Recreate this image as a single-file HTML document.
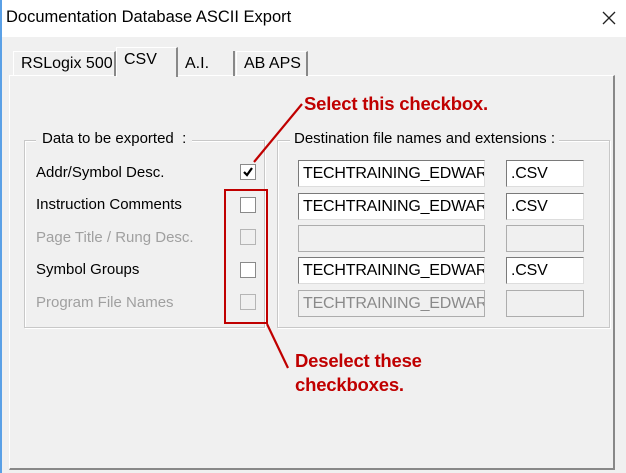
<!DOCTYPE html>
<html><head><style>
*{margin:0;padding:0;box-sizing:border-box}
body{width:626px;height:473px;background:#f0f0f0;font-family:"Liberation Sans",sans-serif;position:relative;overflow:hidden;color:#000}
.a{position:absolute}
.t{font-size:15px;white-space:nowrap}
.g{color:#a0a0a0}
.cb{position:absolute;width:16px;height:16px;border:1px solid #8a8a8a;background:#fff}
.cb.d{background:#f0f0f0;border-color:#b5b5b5}
.tb{position:absolute;height:27px;border:1px solid #7a7a7a;border-right-color:#ddd;border-bottom-color:#ddd;background:#fff;font-size:16px;line-height:25px;padding-left:4px;overflow:hidden;white-space:nowrap;letter-spacing:-0.2px}
.tb.d{background:#f0f0f0;border-color:#adadad}
.grp{position:absolute;border:1px solid #c8c8c8;box-shadow:inset 1px 1px 0 #fff,1px 1px 0 #fff}
.red{color:#c00000;font-weight:bold;font-size:18.5px;font-family:"Liberation Sans Narrow","Liberation Sans",sans-serif;letter-spacing:-0.2px}
</style></head><body>
<div class="a" style="left:0;top:0;width:626px;height:37px;background:#fff"></div>
<div class="a" style="left:0;top:0;width:2px;height:473px;background:#5aa0e6"></div>
<div class="a t" style="left:6px;top:8px;font-size:16.5px">Documentation Database ASCII Export</div>
<svg class="a" style="left:601px;top:10px" width="16" height="16"><path d="M2 2L14 14M14 2L2 14" stroke="#222" stroke-width="1.3"/></svg>
<div class="a" style="left:9px;top:75px;width:606px;height:395px;border:1px solid #fff;border-right:2px solid #888;border-bottom:2px solid #888"></div>
<div class="a" style="left:13px;top:51px;width:103px;height:25px;border:1px solid #fff;border-right:2px solid #888;border-bottom:none"></div>
<div class="a t" style="left:21px;top:55px;font-size:16px">RSLogix 500</div>
<div class="a" style="left:116px;top:47px;width:62px;height:30px;border:1px solid #fff;border-right:2px solid #888;border-bottom:none;background:#f0f0f0"></div>
<div class="a t" style="left:124px;top:51px;font-size:16px">CSV</div>
<div class="a" style="left:178px;top:51px;width:57px;height:25px;border-right:2px solid #888"></div>
<div class="a t" style="left:185px;top:55px;font-size:16px">A.I.</div>
<div class="a" style="left:236px;top:51px;width:72px;height:25px;border:1px solid #fff;border-right:2px solid #888;border-bottom:none"></div>
<div class="a t" style="left:244px;top:55px;font-size:16px">AB APS</div>
<div class="grp" style="left:24px;top:140px;width:241px;height:188px"></div>
<div class="a t" style="left:36px;top:130px;background:#f0f0f0;padding:0 6px 0 6px">Data to be exported&nbsp; :</div>
<div class="a t" style="left:36px;top:164px">Addr/Symbol Desc.</div>
<div class="a t" style="left:36px;top:196px">Instruction Comments</div>
<div class="a t g" style="left:36px;top:229px">Page Title / Rung Desc.</div>
<div class="a t" style="left:36px;top:261px">Symbol Groups</div>
<div class="a t g" style="left:36px;top:294px">Program File Names</div>
<div class="cb" style="left:240px;top:164px"><svg width="14" height="14"><path d="M3 7l3 3 5-7" stroke="#000" stroke-width="2.2" fill="none"/></svg></div>
<div class="cb" style="left:240px;top:197px"></div>
<div class="cb d" style="left:240px;top:229px"></div>
<div class="cb" style="left:240px;top:262px"></div>
<div class="cb d" style="left:240px;top:294px"></div>
<div class="grp" style="left:277px;top:140px;width:333px;height:188px"></div>
<div class="a t" style="left:290px;top:130px;background:#f0f0f0;padding:0 4px">Destination file names and extensions :</div>
<div class="tb" style="left:298px;top:160px;width:187px">TECHTRAINING_EDWAR</div>
<div class="tb" style="left:506px;top:160px;width:78px">.CSV</div>
<div class="tb" style="left:298px;top:193px;width:187px">TECHTRAINING_EDWAR</div>
<div class="tb" style="left:506px;top:193px;width:78px">.CSV</div>
<div class="tb d" style="left:298px;top:225px;width:187px"></div>
<div class="tb d" style="left:506px;top:225px;width:78px"></div>
<div class="tb" style="left:298px;top:257px;width:187px">TECHTRAINING_EDWAR</div>
<div class="tb" style="left:506px;top:257px;width:78px">.CSV</div>
<div class="tb d" style="left:298px;top:290px;width:187px;color:#8a8a8a">TECHTRAINING_EDWAR</div>
<div class="tb d" style="left:506px;top:290px;width:78px"></div>
<div class="a" style="left:224px;top:189px;width:44px;height:135px;border:2px solid #c00000"></div>
<svg class="a" style="left:0;top:0" width="626" height="473"><path d="M254 162L302 104M267 324L288 368" stroke="#c00000" stroke-width="2.2"/></svg>
<div class="a red" style="left:304px;top:93px">Select this checkbox.</div>
<div class="a red" style="left:295px;top:349px;line-height:24px">Deselect these<br>checkboxes.</div>
</body></html>
